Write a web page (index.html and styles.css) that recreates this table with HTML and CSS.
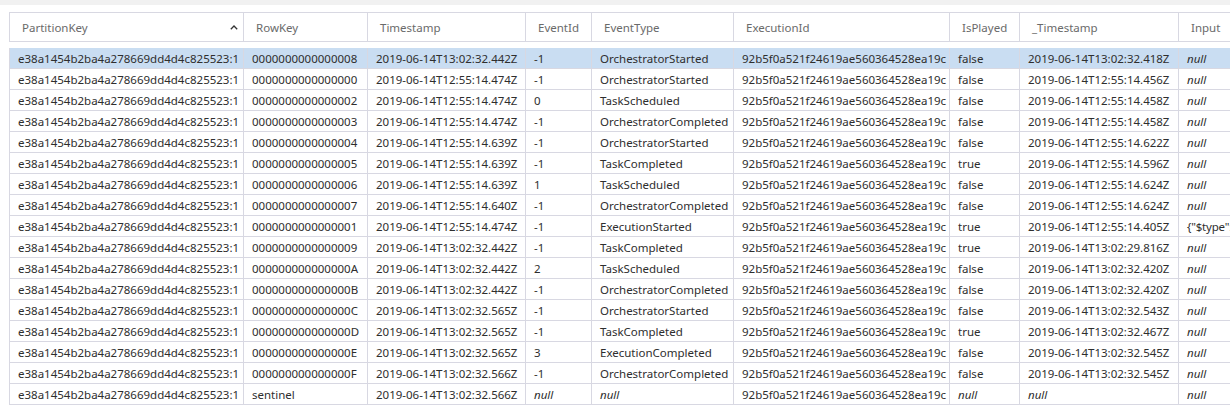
FILE: index.html
```html
<!DOCTYPE html>
<html>
<head>
<meta charset="utf-8">
<link rel="stylesheet" href="styles.css">
</head>
<body>
<div class="topbar"></div>
<div class="grid">
  <div class="head">
    <div class="hc sorted"><span>PartitionKey</span><svg class="caret" width="8" height="5" viewBox="0 0 8 5"><polyline points="0.8,4.2 4,1 7.2,4.2" fill="none" stroke="#333" stroke-width="1.3"/></svg></div>
    <div class="hc">RowKey</div>
    <div class="hc">Timestamp</div>
    <div class="hc">EventId</div>
    <div class="hc">EventType</div>
    <div class="hc">ExecutionId</div>
    <div class="hc">IsPlayed</div>
    <div class="hc">_Timestamp</div>
    <div class="hc">Input</div>
  </div>
  <div class="body">
    <div class="row selected"><div class="c">e38a1454b2ba4a278669dd4d4c825523:1</div><div class="c">0000000000000008</div><div class="c">2019-06-14T13:02:32.442Z</div><div class="c">-1</div><div class="c">OrchestratorStarted</div><div class="c">92b5f0a521f24619ae560364528ea19c</div><div class="c">false</div><div class="c">2019-06-14T13:02:32.418Z</div><div class="c n">null</div></div>
    <div class="row"><div class="c">e38a1454b2ba4a278669dd4d4c825523:1</div><div class="c">0000000000000000</div><div class="c">2019-06-14T12:55:14.474Z</div><div class="c">-1</div><div class="c">OrchestratorStarted</div><div class="c">92b5f0a521f24619ae560364528ea19c</div><div class="c">false</div><div class="c">2019-06-14T12:55:14.456Z</div><div class="c n">null</div></div>
    <div class="row"><div class="c">e38a1454b2ba4a278669dd4d4c825523:1</div><div class="c">0000000000000002</div><div class="c">2019-06-14T12:55:14.474Z</div><div class="c">0</div><div class="c">TaskScheduled</div><div class="c">92b5f0a521f24619ae560364528ea19c</div><div class="c">false</div><div class="c">2019-06-14T12:55:14.458Z</div><div class="c n">null</div></div>
    <div class="row"><div class="c">e38a1454b2ba4a278669dd4d4c825523:1</div><div class="c">0000000000000003</div><div class="c">2019-06-14T12:55:14.474Z</div><div class="c">-1</div><div class="c">OrchestratorCompleted</div><div class="c">92b5f0a521f24619ae560364528ea19c</div><div class="c">false</div><div class="c">2019-06-14T12:55:14.458Z</div><div class="c n">null</div></div>
    <div class="row"><div class="c">e38a1454b2ba4a278669dd4d4c825523:1</div><div class="c">0000000000000004</div><div class="c">2019-06-14T12:55:14.639Z</div><div class="c">-1</div><div class="c">OrchestratorStarted</div><div class="c">92b5f0a521f24619ae560364528ea19c</div><div class="c">false</div><div class="c">2019-06-14T12:55:14.622Z</div><div class="c n">null</div></div>
    <div class="row"><div class="c">e38a1454b2ba4a278669dd4d4c825523:1</div><div class="c">0000000000000005</div><div class="c">2019-06-14T12:55:14.639Z</div><div class="c">-1</div><div class="c">TaskCompleted</div><div class="c">92b5f0a521f24619ae560364528ea19c</div><div class="c">true</div><div class="c">2019-06-14T12:55:14.596Z</div><div class="c n">null</div></div>
    <div class="row"><div class="c">e38a1454b2ba4a278669dd4d4c825523:1</div><div class="c">0000000000000006</div><div class="c">2019-06-14T12:55:14.639Z</div><div class="c">1</div><div class="c">TaskScheduled</div><div class="c">92b5f0a521f24619ae560364528ea19c</div><div class="c">false</div><div class="c">2019-06-14T12:55:14.624Z</div><div class="c n">null</div></div>
    <div class="row"><div class="c">e38a1454b2ba4a278669dd4d4c825523:1</div><div class="c">0000000000000007</div><div class="c">2019-06-14T12:55:14.640Z</div><div class="c">-1</div><div class="c">OrchestratorCompleted</div><div class="c">92b5f0a521f24619ae560364528ea19c</div><div class="c">false</div><div class="c">2019-06-14T12:55:14.624Z</div><div class="c n">null</div></div>
    <div class="row"><div class="c">e38a1454b2ba4a278669dd4d4c825523:1</div><div class="c">0000000000000001</div><div class="c">2019-06-14T12:55:14.474Z</div><div class="c">-1</div><div class="c">ExecutionStarted</div><div class="c">92b5f0a521f24619ae560364528ea19c</div><div class="c">true</div><div class="c">2019-06-14T12:55:14.405Z</div><div class="c clip">{"$type":</div></div>
    <div class="row"><div class="c">e38a1454b2ba4a278669dd4d4c825523:1</div><div class="c">0000000000000009</div><div class="c">2019-06-14T13:02:32.442Z</div><div class="c">-1</div><div class="c">TaskCompleted</div><div class="c">92b5f0a521f24619ae560364528ea19c</div><div class="c">true</div><div class="c">2019-06-14T13:02:29.816Z</div><div class="c n">null</div></div>
    <div class="row"><div class="c">e38a1454b2ba4a278669dd4d4c825523:1</div><div class="c">000000000000000A</div><div class="c">2019-06-14T13:02:32.442Z</div><div class="c">2</div><div class="c">TaskScheduled</div><div class="c">92b5f0a521f24619ae560364528ea19c</div><div class="c">false</div><div class="c">2019-06-14T13:02:32.420Z</div><div class="c n">null</div></div>
    <div class="row"><div class="c">e38a1454b2ba4a278669dd4d4c825523:1</div><div class="c">000000000000000B</div><div class="c">2019-06-14T13:02:32.442Z</div><div class="c">-1</div><div class="c">OrchestratorCompleted</div><div class="c">92b5f0a521f24619ae560364528ea19c</div><div class="c">false</div><div class="c">2019-06-14T13:02:32.420Z</div><div class="c n">null</div></div>
    <div class="row"><div class="c">e38a1454b2ba4a278669dd4d4c825523:1</div><div class="c">000000000000000C</div><div class="c">2019-06-14T13:02:32.565Z</div><div class="c">-1</div><div class="c">OrchestratorStarted</div><div class="c">92b5f0a521f24619ae560364528ea19c</div><div class="c">false</div><div class="c">2019-06-14T13:02:32.543Z</div><div class="c n">null</div></div>
    <div class="row"><div class="c">e38a1454b2ba4a278669dd4d4c825523:1</div><div class="c">000000000000000D</div><div class="c">2019-06-14T13:02:32.565Z</div><div class="c">-1</div><div class="c">TaskCompleted</div><div class="c">92b5f0a521f24619ae560364528ea19c</div><div class="c">true</div><div class="c">2019-06-14T13:02:32.467Z</div><div class="c n">null</div></div>
    <div class="row"><div class="c">e38a1454b2ba4a278669dd4d4c825523:1</div><div class="c">000000000000000E</div><div class="c">2019-06-14T13:02:32.565Z</div><div class="c">3</div><div class="c">ExecutionCompleted</div><div class="c">92b5f0a521f24619ae560364528ea19c</div><div class="c">false</div><div class="c">2019-06-14T13:02:32.545Z</div><div class="c n">null</div></div>
    <div class="row"><div class="c">e38a1454b2ba4a278669dd4d4c825523:1</div><div class="c">000000000000000F</div><div class="c">2019-06-14T13:02:32.566Z</div><div class="c">-1</div><div class="c">OrchestratorCompleted</div><div class="c">92b5f0a521f24619ae560364528ea19c</div><div class="c">false</div><div class="c">2019-06-14T13:02:32.545Z</div><div class="c n">null</div></div>
    <div class="row"><div class="c">e38a1454b2ba4a278669dd4d4c825523:1</div><div class="c">sentinel</div><div class="c">2019-06-14T13:02:32.566Z</div><div class="c n">null</div><div class="c n">null</div><div class="c">92b5f0a521f24619ae560364528ea19c</div><div class="c n">null</div><div class="c n">null</div><div class="c n">null</div></div>
  </div>
</div>
</body>
</html>
```
FILE: styles.css
```css
html, body {
  margin: 0;
  padding: 0;
  background: #ffffff;
  overflow: hidden;
}
body {
  width: 1230px;
  height: 420px;
  font-family: "Noto Sans", "Open Sans", sans-serif;
  font-size: 11.5px;
  color: #2e2e2e;
}
.topbar {
  height: 5px;
  background: #f1f1f1;
}
.grid {
  margin: 7px 0 0 9px;
  width: 1221px;
}
.head, .row {
  display: grid;
  grid-template-columns: 234px 124px 158px 66px 142px 216px 70px 159px 51px;
  border-left: 1px solid #d8d8e2;
}
.head {
  border-top: 1px solid #d8d8e2;
  border-bottom: 1px solid #d8d8e2;
  height: 28px;
  margin-bottom: 6px;
}
.hc {
  display: flex;
  align-items: center;
  padding: 0 12px;
  border-right: 1px solid #d8d8e2;
  color: #6a6a6a;
  white-space: nowrap;
  overflow: hidden;
}
.hc:last-child, .c:last-child {
  border-right: none;
}
.hc.sorted {
  justify-content: space-between;
  padding-right: 5px;
}
.caret {
  display: block;
}
.row {
  height: 20px;
  border-bottom: 1px solid #d8d8e2;
}
.row.selected {
  background: #c9ddf2;
}
.c {
  display: flex;
  align-items: center;
  padding: 0 8px;
  border-right: 1px solid #d8d8e2;
  white-space: nowrap;
  overflow: hidden;
}
.c.n {
  font-style: italic;
}
.c.clip {
  padding-right: 0;
  letter-spacing: -0.2px;
}
```
